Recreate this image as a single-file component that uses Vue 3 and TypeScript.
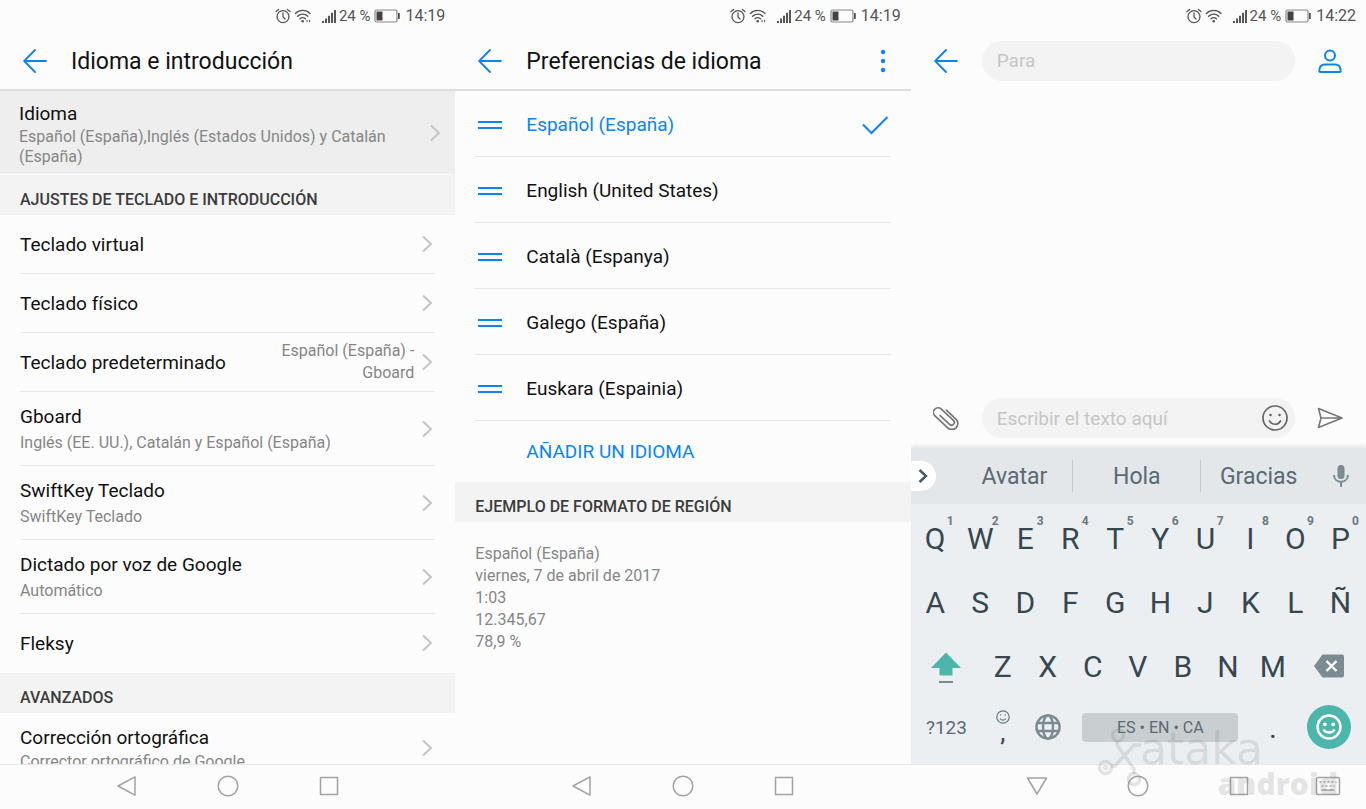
<script setup lang="ts">
import { ref } from 'vue'

interface Panel {
  id: 'settings' | 'languages' | 'message'
  title: string
  time: string
  traffic: boolean
}

interface Setting {
  title: string
  summary?: string
  value?: string
}

const panels: Panel[] = [
  { id: 'settings', title: 'Idioma e introducción', time: '14:19', traffic: true },
  { id: 'languages', title: 'Preferencias de idioma', time: '14:19', traffic: true },
  { id: 'message', title: '', time: '14:22', traffic: false },
]

const settings: Setting[] = [
  { title: 'Teclado virtual' },
  { title: 'Teclado físico' },
  { title: 'Teclado predeterminado', value: 'Español (España) - Gboard' },
  { title: 'Gboard', summary: 'Inglés (EE. UU.), Catalán y Español (España)' },
  { title: 'SwiftKey Teclado', summary: 'SwiftKey Teclado' },
  { title: 'Dictado por voz de Google', summary: 'Automático' },
  { title: 'Fleksy' },
]

const languages = [
  'Español (España)',
  'English (United States)',
  'Català (Espanya)',
  'Galego (España)',
  'Euskara (Espainia)',
]
const selected = ref(languages[0])

const samples = ['Español (España)', 'viernes, 7 de abril de 2017', '1:03', '12.345,67', '78,9 %']

const suggestions = ['Avatar', 'Hola', 'Gracias']
const topRow = 'QWERTYUIOP'.split('').map((letter, i) => ({ letter, digit: (i + 1) % 10 }))
const middleRow = 'ASDFGHJKLÑ'.split('')
const bottomRow = 'ZXCVBNM'.split('')

const recipient = ref('')
const message = ref('')

function typeText(text: string) {
  message.value += text
}
</script>

<template>
  <main class="screens">
    <section v-for="panel in panels" :key="panel.id" class="panel" :class="panel.id">
      <div class="status">
        <svg class="alarm" width="16" height="16" viewBox="0 0 16 16" fill="none" stroke="#555" stroke-width="1.3" stroke-linecap="round">
          <circle cx="8" cy="8.6" r="6" />
          <path d="M8 5v4l2 2M1 3.6 3.6 1.4M15 3.6 12.4 1.4" />
        </svg>
        <svg class="wifi" width="18" height="16" viewBox="0 0 18 16" fill="none" stroke="#555" stroke-width="1.4" stroke-linecap="round">
          <path d="M1.4 5.4C5.6 1.4 12 1.4 16 5.4M3.6 8.2c3-2.8 7.4-2.8 10.2 0M6 10.8c1.6-1.4 3.8-1.4 5.4 0" />
          <circle cx="8.7" cy="13.2" r="1.3" fill="#555" stroke="none" />
          <path v-if="panel.traffic" d="M13 12.2v1.6M15.6 12.2v1.6" stroke-width="1" />
        </svg>
        <svg class="signal" width="16" height="16" viewBox="0 0 16 16" fill="#555">
          <path d="M1 13h2v2H1zM4 10.600h2V15H4zM7 7.800h2V15H7zM10 4.800h2V15h-2zM13 2h2v13h-2z" />
        </svg>
        <span class="percent">24 %</span>
        <svg class="battery" width="27" height="14" viewBox="0 0 27 14">
          <rect x="1" y="1" width="22" height="12" rx="1.500" fill="none" stroke="#888" stroke-width="1.200" />
          <rect x="2.500" y="2.500" width="6" height="9" fill="#444" />
          <rect x="24" y="4" width="1.800" height="6" fill="#555" />
        </svg>
        <time>{{ panel.time }}</time>
      </div>

      <header class="bar">
        <button class="back" type="button" aria-label="Atrás">
          <svg width="24" height="24" viewBox="0 0 24 24" fill="none" stroke="#0b84f3" stroke-width="1.800" stroke-linecap="round" stroke-linejoin="round">
            <path d="M23 12H1.500M12 1 1.200 12 12 23" />
          </svg>
        </button>
        <h1 v-if="panel.title">{{ panel.title }}</h1>
        <button v-if="panel.id === 'languages'" class="more" type="button" aria-label="Más opciones">
          <svg width="8" height="24" viewBox="0 0 8 24" fill="#0b84f3">
            <circle cx="4" cy="3" r="2.200" />
            <circle cx="4" cy="12" r="2.200" />
            <circle cx="4" cy="21" r="2.200" />
          </svg>
        </button>
        <template v-if="panel.id === 'message'">
          <div class="pill">
            <input v-model="recipient" type="text" placeholder="Para" aria-label="Para" />
          </div>
          <button class="side" type="button" aria-label="Contactos">
            <svg width="26" height="26" viewBox="0 0 26 26" fill="none" stroke="#0b84f3" stroke-width="2">
              <circle cx="13" cy="7.500" r="5" />
              <path d="M3.500 24h19q1.500 0 1.200-1.600c-.2-4-2.700-5.900-5.700-5.900H8c-3 0-5.500 1.900-5.700 5.900q-.3 1.600 1.200 1.600z" />
            </svg>
          </button>
        </template>
      </header>

      <div v-if="panel.id === 'settings'" class="content">
        <button class="row featured" type="button">
          <span class="label">
            <span class="name">Idioma</span>
            <span class="summary">Español (España),Inglés (Estados Unidos) y Catalán (España)</span>
          </span>
          <svg class="chevron" width="12" height="18" viewBox="0 0 12 18"><path d="M2 1.500 10 9l-8 7.500" /></svg>
        </button>
        <h2>AJUSTES DE TECLADO E INTRODUCCIÓN</h2>
        <ul class="rows">
          <li v-for="item in settings" :key="item.title">
            <button class="row" :class="{ tall: item.summary }" type="button">
              <span class="label">
                <span class="name">{{ item.title }}</span>
                <span v-if="item.summary" class="summary">{{ item.summary }}</span>
              </span>
              <span v-if="item.value" class="value">{{ item.value }}</span>
              <svg class="chevron" width="12" height="18" viewBox="0 0 12 18"><path d="M2 1.500 10 9l-8 7.500" /></svg>
            </button>
          </li>
        </ul>
        <h2>AVANZADOS</h2>
        <ul class="rows">
          <li>
            <button class="row compact" type="button">
              <span class="label">
                <span class="name">Corrección ortográfica</span>
                <span class="summary">Corrector ortográfico de Google</span>
              </span>
              <svg class="chevron" width="12" height="18" viewBox="0 0 12 18"><path d="M2 1.500 10 9l-8 7.500" /></svg>
            </button>
          </li>
        </ul>
      </div>

      <div v-else-if="panel.id === 'languages'" class="content">
        <ul class="languages-list">
          <li v-for="language in languages" :key="language">
            <button
              class="language"
              :class="{ active: language === selected }"
              type="button"
              :aria-pressed="language === selected"
              @click="selected = language"
            >
              <svg width="24" height="10" viewBox="0 0 24 10" stroke="#0b84f3" stroke-width="2"><path d="M0 2h24M0 8h24" /></svg>
              <span>{{ language }}</span>
              <svg v-if="language === selected" class="check" width="28" height="20" viewBox="0 0 28 20" fill="none" stroke="#0b84f3" stroke-width="2">
                <path d="M2 9.500 10.500 18 26.500 2" />
              </svg>
            </button>
          </li>
        </ul>
        <button class="add" type="button">AÑADIR UN IDIOMA</button>
        <h2>EJEMPLO DE FORMATO DE REGIÓN</h2>
        <div class="samples">
          <p v-for="sample in samples" :key="sample">{{ sample }}</p>
        </div>
      </div>

      <div v-else class="content chat">
        <div class="compose">
          <button class="back" type="button" aria-label="Adjuntar">
            <svg width="26" height="24" viewBox="-13 -12 26 24" fill="none" stroke="#777" stroke-width="1.700" stroke-linecap="round">
              <path transform="rotate(43)" d="M-5-6H8a6 6 0 0 1 0 12H-9.500a4.700 4.700 0 0 1 0-9.400H7a2.800 2.800 0 0 1 0 5.600H-6" />
            </svg>
          </button>
          <div class="pill">
            <input v-model="message" type="text" placeholder="Escribir el texto aquí" aria-label="Mensaje" />
            <button class="emoji" type="button" aria-label="Emoticonos">
              <svg width="28" height="28" viewBox="0 0 28 28" fill="none" stroke="#666" stroke-width="1.700" stroke-linecap="round">
                <circle cx="14" cy="14" r="12" />
                <path d="M8.500 17c2.400 4.300 8.600 4.300 11 0" />
                <circle cx="9.500" cy="11" r="1.300" fill="#666" stroke="none" />
                <circle cx="18.500" cy="11" r="1.300" fill="#666" stroke="none" />
              </svg>
            </button>
          </div>
          <button class="side" type="button" aria-label="Enviar">
            <svg width="26" height="22" viewBox="0 0 26 22" fill="none" stroke="#777" stroke-width="1.600" stroke-linejoin="round">
              <path d="M1.500 1.500 25 11 1.500 20.500 4 11zM4 11h21" />
            </svg>
          </button>
        </div>

        <div class="suggestions">
          <button class="expand" type="button" aria-label="Más herramientas">
            <svg width="10" height="16" viewBox="0 0 10 16" fill="none" stroke="#455a64" stroke-width="2.400"><path d="M1.500 2 8 8l-6.500 6" /></svg>
          </button>
          <div class="words">
            <button v-for="word in suggestions" :key="word" type="button" @click="typeText(word)">{{ word }}</button>
          </div>
          <button class="mic" type="button" aria-label="Dictado por voz">
            <svg width="18" height="24" viewBox="0 0 18 24" fill="none" stroke="#7c8a92" stroke-width="2">
              <rect x="5.500" y="1" width="7" height="14" rx="3.500" fill="#7c8a92" stroke="none" />
              <path d="M2 11c0 9 14 9 14 0M9 18v5" />
            </svg>
          </button>
        </div>

        <div class="keyboard">
          <button v-for="key in topRow" :key="key.letter" class="key" type="button" @click="typeText(key.letter)">
            {{ key.letter }}<sup>{{ key.digit }}</sup>
          </button>
          <button v-for="letter in middleRow" :key="letter" class="key" type="button" @click="typeText(letter)">{{ letter }}</button>
          <button class="key wide" type="button" aria-label="Mayúsculas">
            <svg width="30" height="36" viewBox="0 0 30 36">
              <path d="M15 4.500 30 20h-8.500v7.500h-13V20H0z" fill="#4db6ac" />
              <path d="M8 34h14" stroke="#7c8a92" stroke-width="2" />
            </svg>
          </button>
          <button v-for="letter in bottomRow" :key="letter" class="key" type="button" @click="typeText(letter)">{{ letter }}</button>
          <button class="key wide" type="button" aria-label="Borrar">
            <svg width="30" height="24" viewBox="0 0 30 24">
              <path d="M8.500.500H28a2 2 0 0 1 2 2v19a2 2 0 0 1-2 2H8.500L0 12z" fill="#7c8a92" />
              <path d="m12.500 7 10 10m0-10-10 10" stroke="#fff" stroke-width="2.400" />
            </svg>
          </button>
          <button class="key wide symbols" type="button">?123</button>
          <button class="key comma" type="button" aria-label="Coma y emoticonos">
            <svg width="14" height="14" viewBox="0 0 14 14" fill="none" stroke="#6b7880" stroke-width="1.200">
              <circle cx="7" cy="7" r="6.200" />
              <path d="M4 8.500c1.500 2.200 4.500 2.200 6 0" />
              <path d="M4.700 4.200v1.400M9.300 4.200v1.400" />
            </svg>
            <span>,</span>
          </button>
          <button class="key" type="button" aria-label="Cambiar idioma">
            <svg width="26" height="26" viewBox="0 0 26 26" fill="none" stroke="#7c8a92" stroke-width="2.400">
              <circle cx="13" cy="13" r="11.600" />
              <ellipse cx="13" cy="13" rx="5" ry="11.600" />
              <path d="M2.500 9h21M2.500 17h21" />
            </svg>
          </button>
          <button class="space" type="button" @click="typeText(' ')">ES • EN • CA</button>
          <button class="key" type="button" @click="typeText('.')">.</button>
          <button class="key wide" type="button" aria-label="Emojis">
            <svg width="44" height="44" viewBox="0 0 44 44" fill="none" stroke="#fff" stroke-width="2.400">
              <circle cx="22" cy="22" r="22" fill="#4db6ac" stroke="none" />
              <circle cx="22" cy="22" r="11.500" />
              <path d="M16.500 24.500c2 4 9 4 11 0" />
              <circle cx="17.800" cy="19.300" r="1.900" fill="#fff" stroke="none" />
              <circle cx="26.200" cy="19.300" r="1.900" fill="#fff" stroke="none" />
            </svg>
          </button>
        </div>
      </div>

      <nav class="system">
        <button type="button" aria-label="Atrás">
          <svg width="22" height="22" viewBox="0 0 22 22">
            <path v-if="panel.id !== 'message'" d="M19 1.800v18.400L2 11z" />
            <path v-else d="M1.500 3h19L11 19z" />
          </svg>
        </button>
        <button type="button" aria-label="Inicio">
          <svg width="22" height="22" viewBox="0 0 22 22"><circle cx="11" cy="11" r="9.800" /></svg>
        </button>
        <button type="button" aria-label="Recientes">
          <svg width="22" height="22" viewBox="0 0 22 22"><rect x="2.500" y="2.500" width="17" height="17" /></svg>
        </button>
        <button v-if="panel.id === 'message'" type="button" aria-label="Teclado">
          <svg width="26" height="20" viewBox="0 0 26 20">
            <rect x="1.500" y="1.500" width="23" height="17" rx="1.500" />
            <path d="M4.500 6h17M6.500 10h13" stroke-dasharray="2 2" />
            <path d="M6.500 14h13" />
          </svg>
        </button>
      </nav>
    </section>

    <div class="watermark">
      <svg width="56" height="58" viewBox="0 0 56 58" fill="none" stroke="currentColor" stroke-width="3.500">
        <circle cx="20" cy="6.500" r="5.500" />
        <circle cx="7.500" cy="38.500" r="6" />
        <circle cx="7.500" cy="38.500" r="1" />
        <circle cx="36" cy="50" r="5.500" />
        <path d="M19 12v4l17 24v5M13 37h4l19-21h7" />
      </svg>
      <span class="brand">ataka</span>
      <span class="edition">android</span>
    </div>
  </main>
</template>

<style>
body {
  margin: 0;
  background: #fcfcfc;
}
</style>

<style scoped>
.screens {
  position: relative;
  display: grid;
  grid-template-columns: repeat(3, minmax(0, 1fr));
  height: 100vh;
  overflow: hidden;
  background: #fcfcfc;
  color: #111;
  font-family: Roboto, "Liberation Sans", sans-serif;
  font-size: 19px;
}

button {
  margin: 0;
  padding: 0;
  border: 0;
  background: none;
  color: inherit;
  font: inherit;
  text-align: left;
  cursor: pointer;
}

svg {
  display: block;
  flex: none;
}

ul {
  margin: 0;
  padding: 0;
  list-style: none;
}

.panel {
  display: flex;
  flex-direction: column;
  min-width: 0;
  min-height: 0;
}

.status {
  display: flex;
  flex: none;
  align-items: center;
  justify-content: flex-end;
  height: 31px;
  padding: 0 10px 1px 0;
  color: #555;
  font-size: 16px;
}

.wifi {
  margin-left: 3px;
}

.signal {
  margin-left: 9px;
}

.percent {
  margin-left: 2px;
  font-size: 15px;
}

.battery {
  margin: 0 4px;
}

.bar {
  display: flex;
  flex: none;
  align-items: center;
  box-sizing: border-box;
  height: 59px;
  padding: 0 20px 0 23px;
  border-bottom: 2px solid #dedede;
}

.message .bar {
  border-bottom-color: transparent;
}

.back {
  display: flex;
  flex: none;
  justify-content: center;
  width: 24px;
}

h1 {
  flex: 1;
  margin: 0 0 0 24px;
  padding-top: 2px;
  font-size: 23px;
  font-weight: 400;
}

.more {
  padding: 0 4px;
}

.pill {
  display: flex;
  flex: 1;
  align-items: center;
  box-sizing: border-box;
  min-width: 0;
  height: 40px;
  margin-left: 24px;
  padding: 0 6px 0 15px;
  border-radius: 20px;
  background: #f3f3f3;
}

.pill input {
  flex: 1;
  min-width: 0;
  padding: 0;
  border: 0;
  outline: 0;
  background: none;
  color: #111;
  font: inherit;
}

.pill input::placeholder {
  color: #c6c6c6;
  opacity: 1;
}

.side {
  display: flex;
  flex: none;
  justify-content: center;
  width: 26px;
  margin: 0 3px 0 22px;
}

.content {
  flex: 1;
  min-height: 0;
  overflow: hidden;
}

.rows {
  padding: 0 20px;
}

.rows li {
  border-bottom: 1px solid #e6e6e6;
}

.rows li:last-child {
  border-bottom-color: transparent;
}

.row {
  display: flex;
  align-items: center;
  box-sizing: border-box;
  width: 100%;
  min-height: 58px;
  padding-right: 2px;
}

.row.tall {
  min-height: 73px;
}

.row.compact {
  min-height: 70px;
}

.row.featured {
  min-height: 84px;
  padding: 0 14px 0 19px;
  border-bottom: 1px solid #f8f8f8;
  background: #eee;
}

.label {
  display: flex;
  flex: 1;
  flex-direction: column;
  padding-top: 2px;
  line-height: 26px;
}

.compact .label {
  padding-top: 4px;
  line-height: 24px;
}

.summary,
.value {
  color: #868686;
  font-size: 16px;
}

.featured .summary {
  max-width: 390px;
  line-height: 20px;
}

.value {
  width: 140px;
  margin-right: 7px;
  line-height: 22px;
  text-align: right;
}

.chevron {
  fill: none;
  stroke: #c4c4c4;
  stroke-width: 2;
}

h2 {
  box-sizing: border-box;
  margin: 0;
  padding: 10px 20px 0;
  background: #f3f3f3;
  color: #3c3c3c;
  font-size: 16px;
  font-weight: 500;
  line-height: 30px;
}

.languages-list {
  display: grid;
  grid-auto-rows: 1fr;
  min-height: 330px;
  padding: 0 20px;
}

.languages-list li {
  display: flex;
  border-bottom: 1px solid #e6e6e6;
}

.language {
  display: flex;
  flex: 1;
  gap: 24px;
  align-items: center;
  padding: 2px 2px 0 3px;
}

.language.active,
.add {
  color: #0b84f3;
}

.check {
  margin-left: auto;
}

.add {
  display: block;
  width: 100%;
  padding: 0 20px 0 71px;
  line-height: 61px;
}

.samples {
  padding: 21px 20px;
  color: #868686;
  font-size: 16px;
  line-height: 22px;
}

.samples p {
  margin: 0;
}

.chat {
  display: flex;
  flex-direction: column;
  justify-content: flex-end;
}

.compose {
  display: flex;
  flex: none;
  align-items: center;
  padding: 0 20px 10px 23px;
}

.suggestions {
  display: flex;
  flex: none;
  align-items: center;
  height: 56px;
  background: #e3e7ea;
  box-shadow: 0 -2px 4px #e4e4e4;
  color: #5a6a73;
  font-size: 23px;
}

.expand {
  display: flex;
  align-items: center;
  justify-content: center;
  width: 25px;
  height: 30px;
  border-radius: 0 15px 15px 0;
  background: #fff;
}

.words {
  display: grid;
  flex: 1;
  grid-template-columns: 9fr 10fr 9fr;
  margin-left: 21px;
}

.words button {
  padding-top: 2px;
  line-height: 30px;
  text-align: center;
}

.words button + button {
  border-left: 1px solid #c3c9cd;
}

.mic {
  margin: 0 16px;
}

.keyboard {
  display: grid;
  flex: none;
  grid-template-columns: repeat(20, minmax(0, 1fr));
  grid-template-rows: repeat(3, 64px) 58px;
  padding: 2px 3px 8px 2px;
  background: #eceff1;
  color: #37474f;
  font-size: 30px;
}

.key {
  position: relative;
  display: flex;
  grid-column: span 2;
  align-items: center;
  justify-content: center;
}

.key.wide {
  grid-column: span 3;
}

.key sup {
  position: absolute;
  top: 7px;
  left: 34px;
  color: #6b7880;
  font-size: 12px;
  font-weight: 700;
  line-height: 16px;
}

.key.symbols {
  color: #5a6a73;
  font-size: 19px;
}

.key.comma {
  flex-direction: column;
  font-size: 23px;
  font-weight: 500;
  line-height: 20px;
}

.space {
  grid-column: span 8;
  align-self: center;
  height: 29px;
  margin: 0 12px;
  border-radius: 4px;
  background: #c9ced1;
  color: #5a6a73;
  font-size: 16px;
  text-align: center;
}

.system {
  display: grid;
  flex: none;
  grid-template-columns: 1fr repeat(3, 101px) 1fr;
  align-items: center;
  height: 42px;
  padding-bottom: 2px;
  border-top: 1px solid #e8e8e8;
}

.system button {
  display: flex;
  justify-content: center;
}

.system button:first-child {
  grid-column: 2;
}

.system svg {
  fill: none;
  stroke: #a2a2a2;
  stroke-width: 1.500;
  stroke-linejoin: round;
}

.watermark {
  position: absolute;
  right: 28px;
  bottom: 10px;
  display: grid;
  grid-template-columns: 42px 198px;
  grid-template-rows: 40px 30px;
  color: #80808033;
  pointer-events: none;
}

.watermark svg {
  grid-row: 1 / 3;
}

.brand {
  font-family: "DejaVu Sans", sans-serif;
  font-size: 44px;
  line-height: 40px;
}

.edition {
  font-family: "Open Sans", sans-serif;
  font-size: 30px;
  font-weight: 800;
  line-height: 30px;
  text-align: right;
}
</style>
